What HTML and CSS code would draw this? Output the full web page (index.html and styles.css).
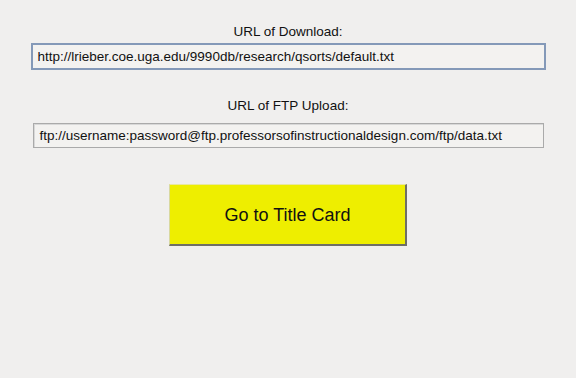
FILE: index.html
```html
<!DOCTYPE html>
<html>
<head>
<meta charset="utf-8">
<link rel="stylesheet" href="styles.css">
</head>
<body>
<div class="page">
  <div class="label label-first">URL of Download:</div>
  <div class="field field-download">http://lrieber.coe.uga.edu/9990db/research/qsorts/default.txt</div>
  <div class="label label-second">URL of FTP Upload:</div>
  <div class="field field-upload">ftp://username:password@ftp.professorsofinstructionaldesign.com/ftp/data.txt</div>
  <div class="button">Go to Title Card</div>
</div>
</body>
</html>
```
FILE: styles.css
```css
html, body {
  margin: 0;
  padding: 0;
}
body {
  width: 576px;
  height: 378px;
  background: #f0efee;
  font-family: "Liberation Sans", Arial, sans-serif;
  color: #111;
  overflow: hidden;
}
.page {
  display: flex;
  flex-direction: column;
  align-items: center;
}
.label {
  font-size: 13.5px;
  line-height: 16px;
  text-align: center;
}
.label-first {
  margin-top: 24px;
}
.label-second {
  margin-top: 28px;
}
.field {
  box-sizing: border-box;
  font-size: 13.5px;
  line-height: 16px;
  padding: 0 0 0 6px;
  display: flex;
  align-items: center;
  background: #f3f2f0;
  white-space: nowrap;
}
.field-download {
  margin-top: 3px;
  width: 515px;
  height: 27px;
  border: 2px solid #8499b8;
  padding-left: 5px;
}
.field-upload {
  margin-top: 9px;
  width: 511px;
  height: 25px;
  border: 1px solid #aaaaaa;
  box-shadow: inset 1px 1px 0 #d8d8d8;
}
.button {
  box-sizing: border-box;
  margin-top: 36px;
  width: 238px;
  height: 62px;
  padding-top: 2px;
  background: #eeee00;
  border-right: 2px solid #6e6e66;
  border-bottom: 2px solid #6e6e66;
  border-left: 1px solid #d8d8a0;
  border-top: 1px solid #e8e8a0;
  display: flex;
  align-items: center;
  justify-content: center;
  font-size: 18px;
  color: #111;
}
```
